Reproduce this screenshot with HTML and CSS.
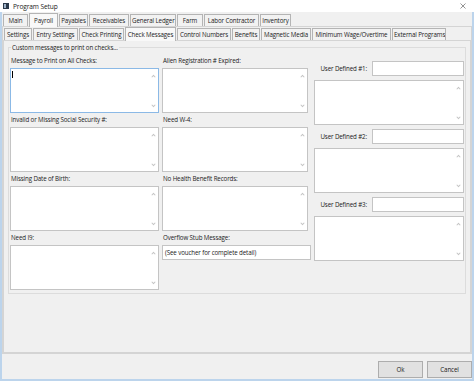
FILE: index.html
```html
<!DOCTYPE html>
<html lang="en">
<head>
    <meta charset="UTF-8">
    <title>Program Setup</title>
    <link rel="stylesheet" href="styles.css">
</head>
<body>

<div class="window">
    <div class="titlebar">
        <svg class="app-icon" width="6" height="6" viewBox="0 0 6 6">
            <rect x="0" y="0" width="6" height="6" fill="#2b3a4a"/>
            <rect x="1" y="1" width="2" height="4" fill="#9fb3c8"/>
        </svg>
        <span class="title">Program Setup</span>
        <svg class="close" width="6" height="6" viewBox="0 0 6 6">
            <path d="M0.5 0.5 L5.5 5.5 M5.5 0.5 L0.5 5.5" stroke="#666" stroke-width="0.7"/>
        </svg>
    </div>

    <div class="client">
        <div class="tabrow outer">
            <div class="tab w-main">Main</div>
            <div class="tab active w-payroll">Payroll</div>
            <div class="tab w-payables">Payables</div>
            <div class="tab w-recv">Receivables</div>
            <div class="tab w-gl">General Ledger</div>
            <div class="tab w-farm">Farm</div>
            <div class="tab w-labor">Labor Contractor</div>
            <div class="tab w-inv">Inventory</div>
        </div>

        <div class="page outer-page">
            <div class="tabrow inner">
                <div class="tab w-settings">Settings</div>
                <div class="tab w-entry">Entry Settings</div>
                <div class="tab w-printing">Check Printing</div>
                <div class="tab active w-messages">Check Messages</div>
                <div class="tab w-control">Control Numbers</div>
                <div class="tab w-benefits">Benefits</div>
                <div class="tab w-magnetic">Magnetic Media</div>
                <div class="tab w-minwage">Minimum Wage/Overtime</div>
                <div class="tab w-external">External Programs</div>
            </div>

            <div class="page inner-page">
                <fieldset class="group">
                    <legend>Custom messages to print on checks...</legend>
                    <div class="cols">
                        <div class="col col-a">
                            <div class="label">Message to Print on All Checks:</div>
                            <div class="memo focused">
                                <div class="memo-text"><span class="caret"></span></div>
                                <div class="scroll"><span class="up"></span><span class="down"></span></div>
                            </div>
                            <div class="label">Invalid or Missing Social Security #:</div>
                            <div class="memo">
                                <div class="memo-text"></div>
                                <div class="scroll"><span class="up"></span><span class="down"></span></div>
                            </div>
                            <div class="label">Missing Date of Birth:</div>
                            <div class="memo">
                                <div class="memo-text"></div>
                                <div class="scroll"><span class="up"></span><span class="down"></span></div>
                            </div>
                            <div class="label">Need I9:</div>
                            <div class="memo">
                                <div class="memo-text"></div>
                                <div class="scroll"><span class="up"></span><span class="down"></span></div>
                            </div>
                        </div>

                        <div class="col col-b">
                            <div class="label">Alien Registration # Expired:</div>
                            <div class="memo">
                                <div class="memo-text"></div>
                                <div class="scroll"><span class="up"></span><span class="down"></span></div>
                            </div>
                            <div class="label">Need W-4:</div>
                            <div class="memo">
                                <div class="memo-text"></div>
                                <div class="scroll"><span class="up"></span><span class="down"></span></div>
                            </div>
                            <div class="label">No Health Benefit Records:</div>
                            <div class="memo">
                                <div class="memo-text"></div>
                                <div class="scroll"><span class="up"></span><span class="down"></span></div>
                            </div>
                            <div class="label">Overflow Stub Message:</div>
                            <div class="textbox wide">(See voucher for complete detail)</div>
                        </div>

                        <div class="col col-c">
                            <div class="ud-row">
                                <span class="ud-label">User Defined #1:</span>
                                <div class="textbox"></div>
                            </div>
                            <div class="memo">
                                <div class="memo-text"></div>
                                <div class="scroll"><span class="up"></span><span class="down"></span></div>
                            </div>
                            <div class="ud-row">
                                <span class="ud-label">User Defined #2:</span>
                                <div class="textbox"></div>
                            </div>
                            <div class="memo">
                                <div class="memo-text"></div>
                                <div class="scroll"><span class="up"></span><span class="down"></span></div>
                            </div>
                            <div class="ud-row">
                                <span class="ud-label">User Defined #3:</span>
                                <div class="textbox"></div>
                            </div>
                            <div class="memo">
                                <div class="memo-text"></div>
                                <div class="scroll"><span class="up"></span><span class="down"></span></div>
                            </div>
                        </div>
                    </div>
                </fieldset>
            </div>
        </div>

        <div class="actions">
            <button class="button">Ok</button>
            <button class="button">Cancel</button>
        </div>
    </div>
</div>

</body>
</html>
```

FILE: styles.css
```css
* {
    box-sizing: border-box;
}
body {
    margin: 0;
    font-family: "Open Sans", "Noto Sans", sans-serif;
    font-size: 6.2px;
    letter-spacing: -0.12px;
    color: #1a1a1a;
    background-color: #bcd4ec;
}
.window {
    width: 474px;
    height: 381px;
    display: flex;
    flex-direction: column;
    border: 2px solid #bcd4ec;
    border-top: 0;
    background-color: #f0f0f0;
}
.titlebar {
    height: 12px;
    margin: 0 -2px;
    padding: 0 8px 0 3px;
    display: flex;
    align-items: center;
    background-color: #fff;
}
.app-icon {
    margin-right: 4px;
}
.title {
    flex: 1;
    font-size: 6.6px;
}
.client {
    flex: 1;
    display: flex;
    flex-direction: column;
}
.tabrow {
    display: flex;
    align-items: flex-end;
    height: 14px;
    padding-left: 1px;
}
.tabrow.inner {
    height: 14px;
    padding-left: 1px;
    margin-top: -1px;
}
.tab {
    height: 12px;
    line-height: 11px;
    padding: 0 1px;
    margin-right: 1px;
    text-align: center;
    white-space: nowrap;
    overflow: hidden;
    border: 1px solid #b4b4b4;
    border-bottom: 0;
    background-color: #f2f2f2;
}
.tab.active {
    height: 14px;
    line-height: 13px;
    margin-bottom: -1px;
    position: relative;
    background-color: #f8f8f8;
}
.w-main { width: 25px; }
.w-payroll { width: 29px; }
.w-payables { width: 29px; }
.w-recv { width: 40px; }
.w-gl { width: 46px; }
.w-farm { width: 26px; }
.w-labor { width: 55px; }
.w-inv { width: 31px; }
.w-settings { width: 28px; }
.w-entry { width: 45px; }
.w-printing { width: 45px; }
.w-messages { width: 51px; }
.w-control { width: 54px; }
.w-benefits { width: 28px; }
.w-magnetic { width: 50px; }
.w-minwage { width: 79px; }
.w-external { width: 54px; }
.page {
    border: 1px solid #d4d4d4;
}
.outer-page {
    flex: 1;
    display: flex;
    flex-direction: column;
}
.inner-page {
    flex: 1;
    padding: 2px 4px 0 4px;
    background-color: #f0f0f0;
}
.group {
    margin: 0;
    padding: 0 0 3px 1px;
    border: 1px solid #dcdcdc;
}
.group legend {
    padding: 0 1px;
    margin-left: 1px;
    line-height: 9px;
}
.cols {
    display: flex;
    padding-top: 2px;
}
.col-a {
    width: 149px;
}
.col-b {
    width: 146px;
    margin-left: 3px;
}
.col-c {
    width: 150px;
    margin-left: 6px;
    padding-top: 7px;
}
.label {
    height: 14px;
    line-height: 14px;
    padding-left: 1px;
    white-space: nowrap;
}
.memo {
    height: 45px;
    display: flex;
    border: 1px solid #c4c4c4;
    background-color: #fff;
}
.memo.focused {
    border-color: #8bb9e6;
}
.memo-text {
    flex: 1;
    padding: 2px 1px;
}
.caret {
    display: block;
    width: 1px;
    height: 7px;
    background-color: #000;
}
.scroll {
    width: 9px;
    display: flex;
    flex-direction: column;
    justify-content: space-between;
    align-items: center;
    padding: 5px 0 4px;
}
.up, .down {
    width: 3px;
    height: 3px;
    border-left: 1px solid #c4c4c4;
    border-top: 1px solid #c4c4c4;
}
.up {
    transform: rotate(45deg) translate(1px, 1px);
}
.down {
    transform: rotate(-135deg) translate(1px, 1px);
}
.textbox {
    height: 15px;
    line-height: 13px;
    padding: 0 2px;
    border: 1px solid #c4c4c4;
    background-color: #fff;
    white-space: nowrap;
}
.textbox.wide {
    width: 149px;
}
.ud-row {
    display: flex;
    align-items: center;
    margin-bottom: 4px;
}
.ud-row .textbox {
    width: 92px;
}
.ud-label {
    flex: 1;
    text-align: right;
    padding-right: 5px;
}
.col-c .memo {
    margin-bottom: 4px;
}
.actions {
    height: 25px;
    display: flex;
    justify-content: flex-end;
    align-items: flex-end;
    gap: 4px;
    padding: 0 0 1px 0;
}
.button {
    width: 45px;
    height: 17px;
    font-family: inherit;
    font-size: 6.2px;
    letter-spacing: inherit;
    color: #1a1a1a;
    background-color: #e1e1e1;
    border: 1px solid #adadad;
    padding: 0;
}
```
